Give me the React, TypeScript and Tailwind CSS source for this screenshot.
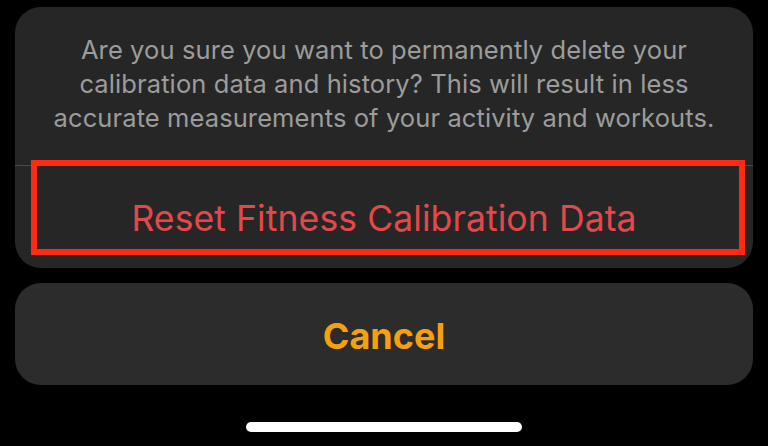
export default function App() {
  return (
    <div className="relative w-[768px] h-[446px] bg-black overflow-hidden flex flex-col px-[15px] pt-[7px] font-['Inter','Liberation_Sans',sans-serif]">
      {/* Alert sheet */}
      <div className="h-[261px] rounded-[26px] bg-[#262626] flex flex-col overflow-hidden">
        <div className="h-[158px] px-6 pt-[26px] text-center text-[25.5px] leading-[34px] text-[#9c9c9c] tracking-[0.1px]">
          Are you sure you want to permanently delete your
          <br />
          calibration data and history? This will result in less
          <br />
          accurate measurements of your activity and workouts.
        </div>
        <div className="h-px bg-[#4a4a4a]" />
        <div className="flex-1 flex items-center justify-center pt-[3px]">
          <span className="text-[35.5px] text-[#e5484a] tracking-[0.1px]">
            Reset Fitness Calibration Data
          </span>
        </div>
      </div>

      {/* Cancel */}
      <div className="mt-[15px] h-[102px] rounded-[26px] bg-[#2c2c2c] flex items-center justify-center pt-[3px]">
        <span className="text-[36px] font-bold text-[#f5a00f]">Cancel</span>
      </div>

      {/* Home indicator */}
      <div className="mt-[37px] mx-auto w-[276px] h-[10px] rounded-full bg-white" />

      {/* Highlight annotation */}
      <div className="absolute left-[31px] top-[160px] w-[714px] h-[95px] border-[6px] border-[#ff2a12]" />
    </div>
  );
}
